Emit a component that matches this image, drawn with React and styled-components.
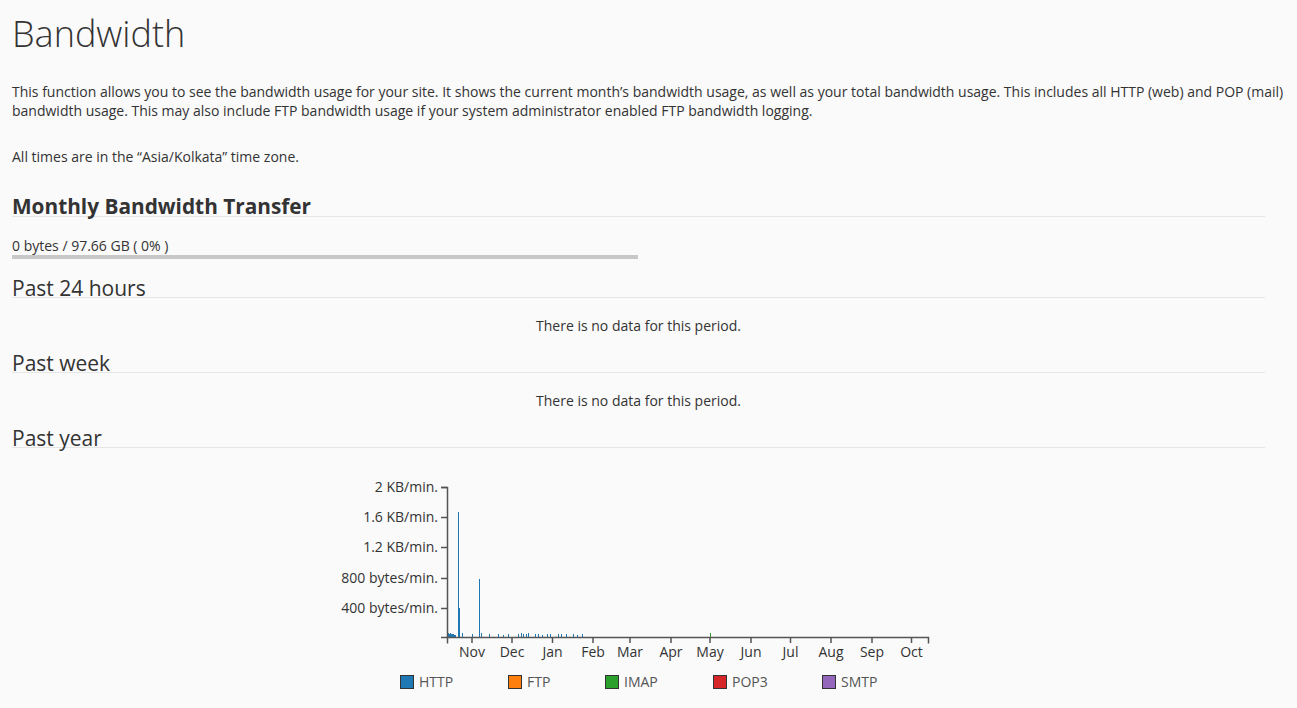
import React from 'react'
import styled, {createGlobalStyle} from 'styled-components'

const GlobalStyle = createGlobalStyle`
body {
  margin: 0;
  background: #fafafa;
  font-family: "Open Sans", "Liberation Sans", sans-serif;
  color: #333;
}
`

const months = [
    ['Nov', 132], ['Dec', 172], ['Jan', 212.5], ['Feb', 253], ['Mar', 290], ['Apr', 331],
    ['May', 370], ['Jun', 411], ['Jul', 450.5], ['Aug', 491], ['Sep', 532], ['Oct', 571.5],
]

const yTicks = [
    ['2 KB/min.', 17], ['1.6 KB/min.', 47], ['1.2 KB/min.', 77],
    ['800 bytes/min.', 108], ['400 bytes/min.', 138], ['', 167],
]

// x, top (svg coords), drawn on half pixels so they stay crisp
const bars = [
    [108, 163], [109, 164], [110, 163], [111, 164], [112, 164], [113, 164], [114, 165], [115, 165],
    [118, 42], [119, 138], [122, 163], [132, 164], [139, 109], [141, 163],
    [149, 164], [158, 164], [163, 165], [168, 164], [178, 164], [181, 163], [183, 164],
    [186, 164], [188, 163], [195, 164], [198, 164], [202, 165], [207, 164], [210, 164],
    [218, 164], [221, 164], [226, 164], [233, 164], [237, 165], [242, 164],
]

const legend = [
    ['HTTP', '#1f77b4', 108], ['FTP', '#ff7f0e', 97], ['IMAP', '#2ca02c', 108],
    ['POP3', '#d62728', 109], ['SMTP', '#9467bd', 80],
]

const Chart = () => (
    <Svg width="600" height="202" viewBox="0 0 600 202">
        {bars.map(([x, y], i) => (
            <line key={i} x1={x + 0.5} x2={x + 0.5} y1={y} y2={167} stroke="#1f77b4" strokeWidth="1"/>
        ))}
        <line x1="370.5" x2="370.5" y1="163" y2="167" stroke="#2ca02c" strokeWidth="1"/>
        <path d="M101,17.5H107.5V167.5" fill="none" stroke="#555" strokeWidth="1.5"/>
        <path d="M107.5,173.5V167.5H588.5V173.5" fill="none" stroke="#555" strokeWidth="1.5"/>
        {yTicks.map(([label, y]) => (
            <g key={y}>
                <line x1="101" x2="107" y1={y + 0.5} y2={y + 0.5} stroke="#555" strokeWidth="1.5"/>
                <AxisText x="98" y={y + 5} textAnchor="end">{label}</AxisText>
            </g>
        ))}
        {months.map(([m, x]) => (
            <g key={m}>
                <line x1={x} x2={x} y1="167" y2="173" stroke="#555" strokeWidth="1.5"/>
                <AxisText x={x} y="187" textAnchor="middle">{m}</AxisText>
            </g>
        ))}
    </Svg>
)

const App = () => {
    return (
        <Page>
            <GlobalStyle/>
            <Title>Bandwidth</Title>
            <Intro>
                This function allows you to see the bandwidth usage for your site. It shows the current month’s bandwidth usage, as well as your total bandwidth usage. This includes all HTTP (web) and POP (mail) bandwidth usage. This may also include FTP bandwidth usage if your system administrator enabled FTP bandwidth logging.
            </Intro>
            <TimeZone>All times are in the “Asia/Kolkata” time zone.</TimeZone>

            <Sections>
                <MonthlyHeading>Monthly Bandwidth Transfer</MonthlyHeading>
                <UsageText>0 bytes / 97.66 GB ( 0% )</UsageText>
                <ProgressBar><ProgressFill style={{width: '0%'}}/></ProgressBar>

                <PeriodHeading>Past 24 hours</PeriodHeading>
                <NoData>There is no data for this period.</NoData>

                <PeriodHeading>Past week</PeriodHeading>
                <NoData>There is no data for this period.</NoData>

                <PeriodHeading>Past year</PeriodHeading>
                <ChartWrap>
                    <Chart/>
                    <Legend>
                        {legend.map(([name, color, width]) => (
                            <LegendItem key={name} width={width}>
                                <Swatch color={color}/>
                                {name}
                            </LegendItem>
                        ))}
                    </Legend>
                </ChartWrap>
            </Sections>
        </Page>
    )
}

const Page = styled.div`
padding: 14px 12px 0 12px;
`

const Title = styled.h1`
font-size: 36px;
font-weight: 300;
line-height: 40px;
margin: 0 0 28px 0;
`

const Intro = styled.p`
font-size: 14px;
line-height: 19px;
margin: 0 0 27px 0;
`

const TimeZone = styled.p`
font-size: 14px;
line-height: 19px;
margin: 0 0 30px 0;
`

const Sections = styled.div`
margin-right: 20px;
`

const MonthlyHeading = styled.h2`
font-size: 20.8px;
font-weight: 700;
line-height: 20px;
margin: 0;
border-bottom: 1px solid #e6e6e6;
`

const UsageText = styled.div`
font-size: 14px;
line-height: 19px;
margin-top: 19px;
`

const ProgressBar = styled.div`
width: 626px;
height: 4px;
margin-bottom: 20px;
background: #c8c8c8;
`

const ProgressFill = styled.div`
height: 100%;
background: #1f77b4;
`

const PeriodHeading = styled.h3`
font-size: 21px;
font-weight: 400;
line-height: 18px;
margin: 19px 0 0 0;
border-bottom: 1px solid #e6e6e6;
`

const NoData = styled.div`
font-size: 14px;
line-height: 19px;
text-align: center;
margin-top: 18px;
`

const ChartWrap = styled.div`
margin-top: 22px;
margin-left: 328px;
`

const Svg = styled.svg`
display: block;
`

const AxisText = styled.text`
font-family: "Open Sans", "Liberation Sans", sans-serif;
font-size: 14px;
fill: #333;
`

const Legend = styled.div`
display: flex;
margin-left: 60px;
margin-top: 2px;
`

const LegendItem = styled.div`
display: flex;
align-items: center;
gap: 5px;
width: ${p => p.width}px;
font-size: 14px;
line-height: 16px;
color: #555;
`

const Swatch = styled.span`
width: 12px;
height: 12px;
background: ${p => p.color};
border: 1px solid #333;
`

export default App
